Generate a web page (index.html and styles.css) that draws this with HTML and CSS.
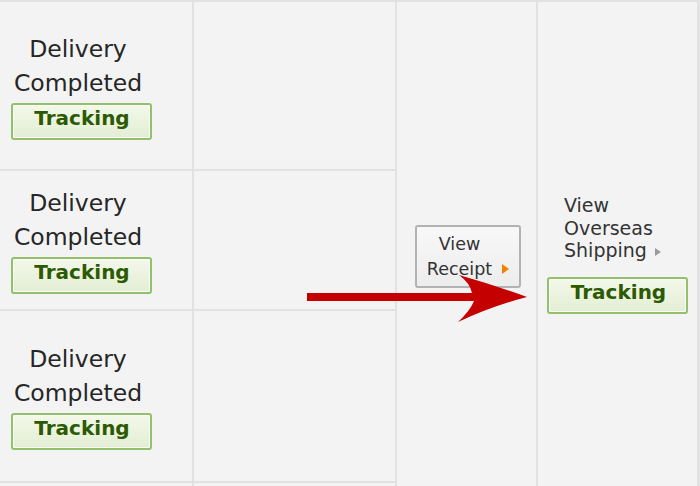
FILE: index.html
```html
<!DOCTYPE html>
<html>
<head>
<meta charset="utf-8">
<link rel="stylesheet" href="styles.css">
</head>
<body>
<div class="grid">
  <div class="cell status r1">
    <div class="status-text">Delivery<br>Completed</div>
    <a class="track">Tracking</a>
  </div>
  <div class="cell r1 c2"></div>
  <div class="cell receipt-col">
    <a class="receipt">
      <span class="receipt-label">View<br>Receipt</span>
      <span class="tri orange"></span>
    </a>
  </div>
  <div class="cell overseas-col">
    <div class="overseas-text">View<br>Overseas<br>Shipping<span class="tri gray"></span></div>
    <a class="track">Tracking</a>
  </div>
  <div class="cell status r2">
    <div class="status-text">Delivery<br>Completed</div>
    <a class="track">Tracking</a>
  </div>
  <div class="cell r2 c2"></div>
  <div class="cell status r3">
    <div class="status-text">Delivery<br>Completed</div>
    <a class="track">Tracking</a>
  </div>
  <div class="cell r3 c2"></div>
  <div class="cell r4"></div>
  <div class="cell r4 c2"></div>
</div>
<svg class="arrow" width="700" height="486" viewBox="0 0 700 486">
  <path d="M307 293 L472 293 Q470 283 459 275 Q494 285 527 297 Q492 306 458 322 Q470 311 474 301 L307 301 Z" fill="#c40000"/>
</svg>
</body>
</html>
```
FILE: styles.css
```css
html, body {
  margin: 0;
  padding: 0;
  width: 700px;
  height: 486px;
  overflow: hidden;
  background: #f3f3f3;
  font-family: "DejaVu Sans", sans-serif;
  color: #2b2b2b;
}
.grid {
  position: relative;
  width: 700px;
  height: 486px;
  box-sizing: border-box;
  padding-top: 2px;
  background: #e2e2e2;
  display: grid;
  grid-template-columns: 192px 201px 139px 159px;
  grid-template-rows: 167px 138px 170px 1fr;
  gap: 2px;
}
.cell {
  background: #f3f3f3;
}
.c2 { grid-column: 2; }
.status {
  grid-column: 1;
  display: flex;
  flex-direction: column;
  align-items: center;
  justify-content: center;
  padding-right: 30px;
}
.r1 { grid-row: 1; }
.r2 { grid-row: 2; }
.r3 { grid-row: 3; }
.r4 { grid-row: 4; }
.status-text {
  font-size: 23.5px;
  line-height: 34px;
  text-align: center;
  margin-bottom: 3px;
  margin-right: 6px;
  color: #262626;
}
.track {
  display: block;
  box-sizing: border-box;
  width: 141px;
  height: 37px;
  border: 2px solid #93c16b;
  border-radius: 3px;
  background: linear-gradient(#f3f8ea, #e3eed3);
  box-shadow: inset 0 0 0 1px #fbfdf7;
  color: #2c5a02;
  font-weight: bold;
  font-size: 20px;
  line-height: 26px;
  text-align: center;
  padding-left: 2px;
}
.receipt-col {
  grid-column: 3;
  grid-row: 1 / 5;
  display: flex;
  justify-content: center;
  align-items: flex-start;
  padding-top: 223px;
}
.receipt {
  box-sizing: border-box;
  width: 106px;
  height: 63px;
  border: 2px solid #b3b3b3;
  border-radius: 3px;
  background: linear-gradient(#f8f8f8, #ededed);
  display: flex;
  justify-content: center;
  align-items: flex-end;
  padding-bottom: 4px;
  margin-left: 3px;
}
.receipt-label {
  font-size: 17.5px;
  line-height: 25px;
  text-align: center;
  color: #333;
}
.tri {
  display: inline-block;
  width: 0;
  height: 0;
}
.orange {
  border-top: 5px solid transparent;
  border-bottom: 5px solid transparent;
  border-left: 7px solid #f08200;
  margin-left: 10px;
  margin-bottom: 8px;
}
.overseas-col {
  grid-column: 4;
  grid-row: 1 / 5;
  display: flex;
  flex-direction: column;
  align-items: center;
  padding-top: 192px;
}
.overseas-text {
  align-self: flex-start;
  padding-left: 26px;
  font-size: 19px;
  line-height: 22.5px;
  color: #333;
  margin-bottom: 15px;
}
.gray {
  border-top: 4.5px solid transparent;
  border-bottom: 4.5px solid transparent;
  border-left: 6px solid #9a9a9a;
  margin-left: 8px;
  vertical-align: 1px;
}
.arrow {
  position: absolute;
  left: 0;
  top: 0;
  pointer-events: none;
}
```
